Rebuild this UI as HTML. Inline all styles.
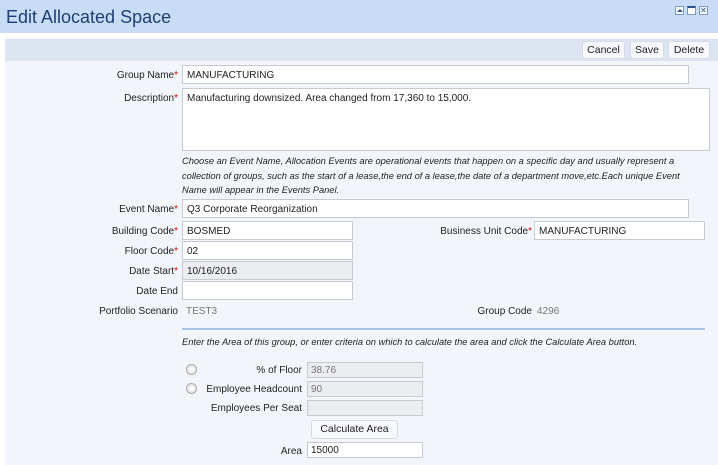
<!DOCTYPE html>
<html><head><style>
*{margin:0;padding:0;box-sizing:border-box}
body{width:718px;height:465px;background:#fff;font-family:"Liberation Sans",sans-serif;font-size:10px;color:#222;position:relative;overflow:hidden}
.a{position:absolute}
#title{left:0;top:0;width:718px;height:33px;background:#c9dcf5}
#title span{position:absolute;left:6px;top:7px;font-size:18px;color:#1d3f72}
#panel{left:5px;top:38px;width:713px;height:427px;background:#f2f5fa}
#tb{left:5px;top:39px;width:713px;height:22px;background:#dbe4f0}
.btn{position:absolute;height:18px;background:#f6f8fb;border:1px solid #d5dbe4;border-radius:3px;font-size:10.5px;text-align:center;line-height:16px;color:#222}
.in{position:absolute;background:#fff;border:1px solid #c6cbd3;height:19px;padding:4px 4px 2px;font-size:10px;white-space:nowrap}
.dis{background:#ebedf0}
.lb{position:absolute;text-align:right;white-space:nowrap;font-size:10px}
.lb b{color:#c00;font-weight:normal}
.it{position:absolute;font-style:italic;font-size:9.3px;line-height:14.5px;color:#222;white-space:nowrap}
.gr{color:#777}
.rad{position:absolute;width:11px;height:11px;border-radius:50%;border:1px solid #aaa;background:radial-gradient(#fff,#ddd)}
.wi{position:absolute;top:6px;width:9px;height:9px;background:#fff;border:1px solid #7a9acb}
</style></head><body>
<div class="a" id="title"><span>Edit Allocated Space</span>
<div class="wi" style="left:675px"><div style="position:absolute;left:1px;top:2px;border:3px solid transparent;border-bottom:3px solid #2a4f8a;border-top:0"></div></div>
<div class="wi" style="left:687px;border-top:2px solid #2a4f8a"></div>
<div class="wi" style="left:699px;font-size:8px;line-height:7px;text-align:center;color:#2a4f8a">✕</div>
</div>
<div class="a" id="panel"></div>
<div class="a" id="tb"></div>
<div class="btn" style="left:582px;top:41px;width:43px">Cancel</div>
<div class="btn" style="left:630px;top:41px;width:34px">Save</div>
<div class="btn" style="left:668px;top:41px;width:42px">Delete</div>

<div class="lb" style="right:540px;top:70px">Group Name<b>*</b></div>
<div class="in" style="left:182px;top:65px;width:507px">MANUFACTURING</div>
<div class="lb" style="right:540px;top:93px">Description<b>*</b></div>
<div class="in" style="left:182px;top:88px;width:528px;height:63px">Manufacturing downsized. Area changed from 17,360 to 15,000.</div>
<div class="it" style="left:182px;top:154px">Choose an Event Name, Allocation Events are operational events that happen on a specific day and usually represent a<br>collection of groups, such as the start of a lease,the end of a lease,the date of a department move,etc.Each unique Event<br>Name will appear in the Events Panel.</div>

<div class="lb" style="right:540px;top:204px">Event Name<b>*</b></div>
<div class="in" style="left:182px;top:199px;width:507px">Q3 Corporate Reorganization</div>
<div class="lb" style="right:540px;top:226px">Building Code<b>*</b></div>
<div class="in" style="left:182px;top:221px;width:171px">BOSMED</div>
<div class="lb" style="right:186px;top:226px">Business Unit Code<b>*</b></div>
<div class="in" style="left:534px;top:221px;width:171px">MANUFACTURING</div>
<div class="lb" style="right:540px;top:246px">Floor Code<b>*</b></div>
<div class="in" style="left:182px;top:241px;width:171px">02</div>
<div class="lb" style="right:540px;top:266px">Date Start<b>*</b></div>
<div class="in dis" style="left:182px;top:261px;width:171px">10/16/2016</div>
<div class="lb" style="right:540px;top:286px">Date End</div>
<div class="in" style="left:182px;top:281px;width:171px"></div>
<div class="lb" style="right:540px;top:306px">Portfolio Scenario</div>
<div class="a gr" style="left:186px;top:306px">TEST3</div>
<div class="lb" style="right:186px;top:306px">Group Code</div>
<div class="a gr" style="left:537px;top:306px">4296</div>

<div class="a" style="left:182px;top:328px;width:523px;height:2px;background:#a9c4e8"></div>
<div class="it" style="left:182px;top:335px">Enter the Area of this group, or enter criteria on which to calculate the area and click the Calculate Area button.</div>

<div class="rad" style="left:186px;top:364px"></div>
<div class="lb" style="right:416px;top:365px">% of Floor</div>
<div class="in dis gr" style="left:307px;top:362px;width:116px;height:16px;padding:2px 3px">38.76</div>
<div class="rad" style="left:186px;top:383px"></div>
<div class="lb" style="right:416px;top:384px">Employee Headcount</div>
<div class="in dis gr" style="left:307px;top:381px;width:116px;height:16px;padding:2px 3px">90</div>
<div class="lb" style="right:416px;top:403px">Employees Per Seat</div>
<div class="in dis" style="left:307px;top:400px;width:116px;height:16px"></div>
<div class="btn" style="left:311px;top:420px;width:87px;height:19px;line-height:17px">Calculate Area</div>
<div class="lb" style="right:416px;top:446px">Area</div>
<div class="in" style="left:307px;top:442px;width:116px;height:16px;padding:2px 3px">15000</div>
</body></html>
